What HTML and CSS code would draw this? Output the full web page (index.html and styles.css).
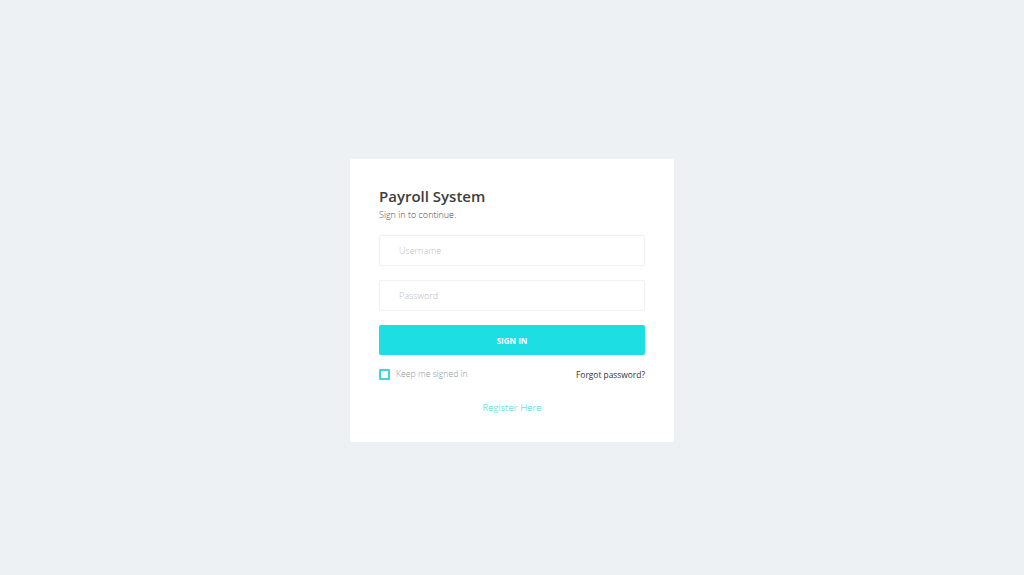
FILE: index.html
```html
<!DOCTYPE html>
<html lang="en">
<head>
<meta charset="utf-8">
<title>Payroll System</title>
<link rel="stylesheet" href="styles.css">
</head>
<body>
<main class="page">
  <section class="card">
    <h1 class="title">Payroll System</h1>
    <p class="subtitle">Sign in to continue.</p>
    <form class="form">
      <input class="field" type="text" placeholder="Username">
      <input class="field" type="password" placeholder="Password">
      <button class="btn" type="button">SIGN IN</button>
      <div class="row">
        <label class="keep"><span class="box"></span>Keep me signed in</label>
        <a class="forgot" href="#">Forgot password?</a>
      </div>
      <a class="register" href="#">Register Here</a>
    </form>
  </section>
</main>
</body>
</html>
```
FILE: styles.css
```css
html, body {
  margin: 0;
  height: 100%;
}
body {
  background: #eef1f4;
  font-family: "Open Sans", "Liberation Sans", sans-serif;
}
.page {
  height: 100%;
  display: flex;
  align-items: center;
  justify-content: center;
}
.card {
  width: 324px;
  box-sizing: border-box;
  background: #fff;
  border-radius: 2px;
  padding: 27px 29px 28px;
  margin-top: 26px;
}
.title {
  margin: 0;
  font-size: 15px;
  font-weight: 600;
  color: #3d3d3d;
  line-height: 20px;
}
.subtitle {
  margin: 3px 0 0;
  font-size: 9px;
  font-weight: 300;
  color: #4a4a4a;
  line-height: 12px;
}
.form {
  display: flex;
  flex-direction: column;
  margin-top: 14px;
}
.field {
  height: 31px;
  box-sizing: border-box;
  border: 1px solid #f0f1f3;
  border-radius: 2px;
  padding: 0 19px;
  font-family: inherit;
  font-size: 9px;
  font-weight: 300;
  margin-bottom: 14px;
  outline: none;
}
.field::placeholder {
  color: #b9bcc0;
}
.btn {
  height: 30px;
  border: none;
  border-radius: 2px;
  background: #1ddfe3;
  color: #fff;
  font-family: inherit;
  font-size: 8px;
  font-weight: 700;
  margin-top: 0;
  padding: 0;
}
.row {
  display: flex;
  justify-content: space-between;
  align-items: center;
  margin-top: 13px;
}
.keep {
  display: flex;
  align-items: center;
  font-size: 8.7px;
  font-weight: 300;
  color: #8e9296;
}
.box {
  width: 11px;
  height: 11px;
  box-sizing: border-box;
  border: 2px solid #3dd6dd;
  border-radius: 1px;
  margin-right: 6px;
}
.forgot {
  font-size: 8.4px;
  color: #333;
  text-decoration: none;
}
.register {
  align-self: center;
  margin-top: 21px;
  font-size: 9.7px;
  font-weight: 300;
  color: #32d3db;
  text-decoration: none;
}
```
